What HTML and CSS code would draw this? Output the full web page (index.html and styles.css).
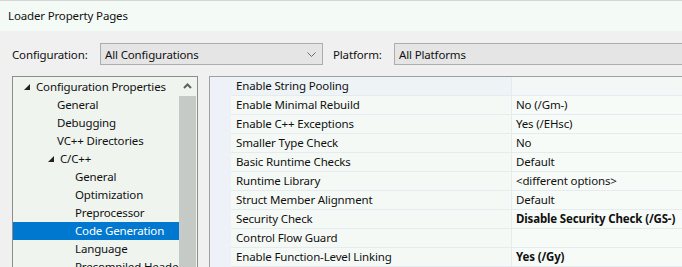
FILE: index.html
```html
<!DOCTYPE html>
<html>
<head>
<meta charset="utf-8">
<link rel="stylesheet" href="styles.css">
</head>
<body>
<div class="window">
  <div class="titlebar">Loader Property Pages</div>
  <div class="toolbar">
    <span class="label cfg-label">Configuration:</span>
    <div class="combo cfg-combo">
      <span>All Configurations</span>
      <svg class="chev" width="9" height="5" viewBox="0 0 9 5"><polyline points="0.5,0.5 4.5,4.5 8.5,0.5" fill="none" stroke="#6d6d6d" stroke-width="1"/></svg>
    </div>
    <span class="label plat-label">Platform:</span>
    <div class="combo plat-combo"><span>All Platforms</span></div>
  </div>
  <div class="panels">
    <div class="tree">
      <ul class="items">
        <li class="lvl0"><svg class="tri" width="6" height="6" viewBox="0 0 6 6"><polygon points="6,0 6,6 0,6" fill="#222"/></svg>Configuration Properties</li>
        <li class="lvl1">General</li>
        <li class="lvl1">Debugging</li>
        <li class="lvl1">VC++ Directories</li>
        <li class="lvl1b"><svg class="tri" width="6" height="6" viewBox="0 0 6 6"><polygon points="6,0 6,6 0,6" fill="#222"/></svg>C/C++</li>
        <li class="lvl2">General</li>
        <li class="lvl2">Optimization</li>
        <li class="lvl2">Preprocessor</li>
        <li class="lvl2 selected">Code Generation</li>
        <li class="lvl2">Language</li>
        <li class="lvl2">Precompiled Headers</li>
      </ul>
      <div class="scrollbar">
        <div class="scroll-up"><svg width="9" height="6" viewBox="0 0 9 6"><polyline points="1,5 4.5,1.5 8,5" fill="none" stroke="#606060" stroke-width="2"/></svg></div>
        <div class="thumb"></div>
      </div>
    </div>
    <div class="grid">
      <div class="gutter"></div>
      <div class="rows">
        <div class="row first"><div class="name">Enable String Pooling</div><div class="value"></div></div>
        <div class="row"><div class="name">Enable Minimal Rebuild</div><div class="value">No (/Gm-)</div></div>
        <div class="row"><div class="name">Enable C++ Exceptions</div><div class="value">Yes (/EHsc)</div></div>
        <div class="row"><div class="name">Smaller Type Check</div><div class="value">No</div></div>
        <div class="row"><div class="name">Basic Runtime Checks</div><div class="value">Default</div></div>
        <div class="row"><div class="name">Runtime Library</div><div class="value">&lt;different options&gt;</div></div>
        <div class="row"><div class="name">Struct Member Alignment</div><div class="value">Default</div></div>
        <div class="row"><div class="name">Security Check</div><div class="value bold">Disable Security Check (/GS-)</div></div>
        <div class="row"><div class="name">Control Flow Guard</div><div class="value"></div></div>
        <div class="row"><div class="name">Enable Function-Level Linking</div><div class="value bold">Yes (/Gy)</div></div>
      </div>
    </div>
  </div>
</div>
</body>
</html>
```

FILE: styles.css
```css
* { box-sizing: border-box; }
html, body { margin: 0; padding: 0; }
body {
  width: 682px;
  height: 267px;
  overflow: hidden;
  background: #f0f0f0;
  font-family: "Noto Sans", "Open Sans", sans-serif;
  font-size: 11.5px;
  letter-spacing: -0.15px;
  color: #1a1a1a;
}
.window { width: 682px; height: 267px; overflow: hidden; }
.titlebar {
  height: 31px;
  border-top: 1px solid #d6d6d6;
  background: #f4fbf6;
  padding-left: 8px;
  line-height: 29px;
  color: #111;
  white-space: nowrap;
}
.toolbar {
  display: flex;
  align-items: center;
  height: 45px;
  padding-top: 12px;
  padding-bottom: 11px;
  white-space: nowrap;
}
.label { color: #111; flex: none; }
.cfg-label { margin-left: 12px; width: 88px; }
.plat-label { margin-left: 10px; width: 61px; }
.combo {
  height: 22px;
  border: 1px solid #adadad;
  background: #e5e5e5;
  display: flex;
  align-items: center;
  padding-left: 4px;
  color: #111;
  flex: none;
}
.cfg-combo { width: 223px; justify-content: space-between; padding-right: 6px; }
.plat-combo { width: 300px; }
.chev { display: block; }

.panels {
  display: flex;
  gap: 11px;
  height: 191px;
}
.tree {
  margin-left: 12px;
  width: 186px;
  flex: none;
  border: 1px solid #8c8c8c;
  border-bottom: none;
  background: #eff4ef;
  display: flex;
  padding-top: 1px;
}
.items {
  list-style: none;
  margin: 0;
  padding: 0;
  width: 166px;
  flex: none;
  overflow: hidden;
  white-space: nowrap;
}
.items li {
  height: 18px;
  line-height: 18px;
  display: flex;
  align-items: center;
  color: #111;
}
.items .lvl0 { padding-left: 11px; }
.items .lvl1 { padding-left: 44px; }
.items .lvl1b { padding-left: 35px; }
.items .lvl2 { padding-left: 62px; }
.tri { margin-right: 6px; flex: none; }
.items .selected { background: #0078cf; color: #fff; }
.scrollbar {
  width: 17px;
  flex: none;
  margin-top: -1px;
  display: flex;
  flex-direction: column;
}
.scroll-up {
  height: 19px;
  display: flex;
  align-items: center;
  justify-content: center;
  padding-bottom: 2px;
}
.thumb { flex: 1; background: #c6cac6; }

.grid {
  flex: 1;
  border-top: 1px solid #a0a0a0;
  border-left: 1px solid #a0a0a0;
  background: #eef2f8;
  display: flex;
}
.gutter { width: 21px; flex: none; }
.rows { flex: 1; }
.row {
  display: flex;
  height: 19px;
  border-bottom: 1px solid #e6ebef;
  white-space: nowrap;
}
.name {
  width: 281px;
  flex: none;
  background: #f5f9f5;
  padding-left: 5px;
  line-height: 18px;
  border-right: 1px solid #e6ebef;
  color: #111;
}
.value {
  flex: 1;
  background: #f7fbf7;
  padding-left: 4px;
  line-height: 18px;
  color: #111;
  overflow: hidden;
}
.row.first .name { background: #eef3f6; }
.row.first .value { background: #f3f8f6; }
.bold { font-weight: bold; }
```
